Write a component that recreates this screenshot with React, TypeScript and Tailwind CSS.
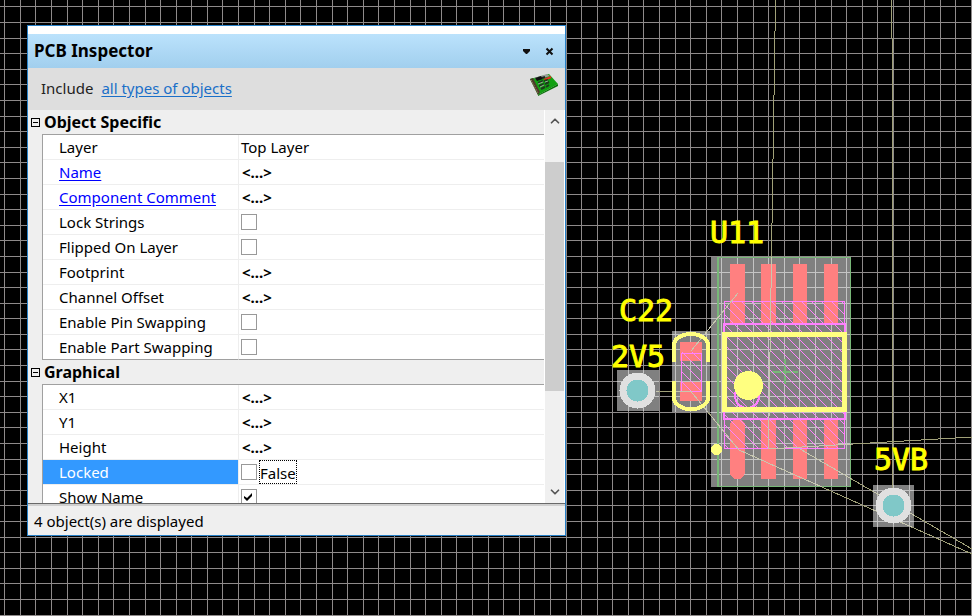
import { ChevronDown, ChevronUp } from "lucide-react";

type Row = {
  label: string;
  kind: "text" | "mixed" | "check";
  value?: string;
  link?: boolean;
  checked?: boolean;
  selected?: boolean;
};

const objectRows: Row[] = [
  { label: "Layer", kind: "text", value: "Top Layer" },
  { label: "Name", kind: "mixed", link: true },
  { label: "Component Comment", kind: "mixed", link: true },
  { label: "Lock Strings", kind: "check" },
  { label: "Flipped On Layer", kind: "check" },
  { label: "Footprint", kind: "mixed" },
  { label: "Channel Offset", kind: "mixed" },
  { label: "Enable Pin Swapping", kind: "check" },
  { label: "Enable Part Swapping", kind: "check" },
];

const graphicalRows: Row[] = [
  { label: "X1", kind: "mixed" },
  { label: "Y1", kind: "mixed" },
  { label: "Height", kind: "mixed" },
  { label: "Locked", kind: "check", value: "False", selected: true },
  { label: "Show Name", kind: "check", checked: true },
];

const GRID = 15.592;
const steps = Array.from({ length: 160 }, (_, i) => i);
const gridPath = [
  ...steps.map((i) => `M${Math.floor(4.7 + i * GRID)} 0h1v3000h-1z`),
  ...steps.map((i) => `M0 ${Math.floor(6.95 + i * GRID)}h3000v1h-3000z`),
].join("");

const padColumns = [
  { x: 730, w: 15 },
  { x: 761, w: 15 },
  { x: 793, w: 14 },
  { x: 824, w: 14 },
];

function Via({ x, y }: { x: number; y: number }) {
  return (
    <g>
      <circle cx={x} cy={y} r="18" fill="#e0e0e0" />
      <circle cx={x} cy={y} r="11" fill="#80c8c8" />
    </g>
  );
}

function Board() {
  return (
    <svg className="absolute inset-0 h-full w-full" aria-label="PCB layout" shapeRendering="crispEdges">
      <defs>
        <clipPath id="selection">
          <rect x="711" y="257" width="140" height="230" />
          <rect x="672" y="331" width="38" height="81" />
          <rect x="617" y="370" width="42" height="41" />
          <rect x="873" y="485" width="41" height="42" />
        </clipPath>
        <pattern id="hatch" width="10" height="10" patternUnits="userSpaceOnUse">
          <path d="M-1 -1L11 11" stroke="#ff80ff" strokeWidth="1" />
        </pattern>
      </defs>

      <path d={gridPath} fill="#8e8a8a" />
      <g clipPath="url(#selection)">
        <rect width="100%" height="100%" fill="#808080" />
        <path d={gridPath} fill="#c4c4c4" />
      </g>

      {/* U11 */}
      <path d="M718 257V487" stroke="#78b878" strokeWidth="2" />
      <path d="M717 257.5H850.5V486" fill="none" stroke="#78b878" />
      <path d="M717 486H851" stroke="#78b878" strokeWidth="1" />
      {padColumns.map((p) => (
        <rect key={p.x} x={p.x} y="264" width={p.w} height="60" fill="#ff8080" />
      ))}
      {padColumns.map((p, i) => (
        <rect key={p.x} x={p.x} y="419" width={p.w} height="60" rx={i === 0 ? 7 : 0} fill="#ff8080" />
      ))}
      <path d="M784.5 359V384M771 372H798" stroke="#78b878" strokeWidth="2" />
      <rect x="724" y="301" width="121" height="148" fill="url(#hatch)" />
      <path d="M724.5 324V301.5H844.5V324M724.5 419V448.5H844.5V419" fill="none" stroke="#ff80ff" />
      <path d="M724 332V324H845V332M724 411V419H845V411" fill="none" stroke="#ff80ff" strokeWidth="2" />
      <circle cx="747" cy="396" r="12" fill="none" stroke="#ff80ff" strokeWidth="2" />

      {/* C22 */}
      <rect x="680" y="342" width="22" height="19" fill="#ff8080" />
      <rect x="680" y="382" width="22" height="19" fill="#ff8080" />
      <rect x="681" y="352" width="20" height="39" fill="url(#hatch)" />
      <rect x="681" y="353" width="20" height="38" fill="none" stroke="#ff80ff" strokeWidth="1" />

      {/* ratsnest */}
      <g fill="none" stroke="#a0a078">
        <path d="M775.5 0L768.5 449L972 437" />
        <path d="M891.5 0V38M892.5 38V490" />
        <path d="M656 391.5H691L739 450L972 554" />
        <path d="M800 449L972 549" />
      </g>
      <g fill="none" stroke="#c8c8b0" clipPath="url(#selection)">
        <path d="M775.5 0L768.5 449L972 437" />
        <path d="M656 391.5H691L739 450L972 554" />
        <path d="M800 449L972 549" />
      </g>
      <path d="M691 351L738 293" stroke="#c8c8b0" />

      {/* silkscreen */}
      <g fill="none" stroke="#ffff80" strokeWidth="4">
        <path d="M674 362V344Q675 339 681 336Q691 332 701 336Q707 339 708 344V362" />
        <path d="M674 381V399Q675 404 681 407Q691 412 701 407Q707 404 708 399V381" />
        <rect x="724.5" y="334" width="120" height="75.5" strokeWidth="5" />
      </g>
      <circle cx="748.5" cy="385.5" r="14.5" fill="#ffff80" />
      <circle cx="716.5" cy="449.5" r="5.5" fill="#ffff80" />
      <Via x={637.5} y={390.5} />
      <Via x={893.5} y={505.5} />

      <g
        className="font-['DejaVu_Sans_Mono',monospace] text-[30px]"
        fill="#ffff00"
        stroke="#ffff00"
        strokeWidth="1"
      >
        <text x="710" y="243">U11</text>
        <text x="619" y="321">C22</text>
        <text x="611" y="367">2V5</text>
        <text x="874" y="470">5VB</text>
      </g>
    </svg>
  );
}

function BoardIcon() {
  return (
    <svg width="30" height="24" viewBox="0 0 30 24" aria-hidden="true">
      <path d="M1 6L20 1L29 11L9 22Z" fill="#12a012" />
      <path d="M9 22L29 11V13L9 23Z" fill="#087008" />
      <path d="M1 6L4 5L11 19L9 22Z" fill="#4c3b2a" />
      <path d="M2 7L9 20" stroke="#a89070" strokeDasharray="1 1" />
      <path d="M5 5L18 1L21 3L8 7Z" fill="#9ca09c" />
      <path d="M6 5L12 3L14 6L8 8Z" fill="#101010" />
      <path d="M13 5L16 4" stroke="#222" strokeWidth="2" />
      <path d="M15 7L22 4" stroke="#e03020" strokeWidth="2" />
      <path d="M9 10L14 8M10 13L15 11M12 16L16 14M15 8L19 7M16 11L20 9M17 14L20 12" stroke="#1d3a1d" strokeWidth="2" />
      <path d="M9 11L14 9M11 14L15 12M16 9L19 8" stroke="#8fae8f" strokeWidth="1" />
    </svg>
  );
}

function CheckBox({ row }: { row: Row }) {
  return (
    <span className="relative flex size-4 shrink-0">
      <input
        type="checkbox"
        aria-label={row.label}
        defaultChecked={row.checked}
        className="peer size-4 appearance-none border border-[#999999] bg-white"
      />
      <svg
        viewBox="0 0 16 16"
        className="pointer-events-none absolute inset-0 hidden peer-checked:block"
        aria-hidden="true"
      >
        <path d="M3 7L6 9L11 4V7L6 12L3 9Z" fill="#000" />
      </svg>
    </span>
  );
}

function PropertyRow({ row }: { row: Row }) {
  return (
    <tr className="h-[25px] group">
      <th
        scope="row"
        className={`h-[25px] w-[196px] border-r border-b border-[#eeeeee] group-last:border-b-[#a0a0a0] p-0 pl-4 text-left font-normal ${
          row.selected ? "bg-[#3399ff] text-white" : ""
        }`}
      >
        {row.link ? (
          <a href="#" className="text-[#0000ff] underline underline-offset-2">
            {row.label}
          </a>
        ) : (
          row.label
        )}
      </th>
      <td className="h-[25px] border-b border-[#eeeeee] group-last:border-b-[#a0a0a0] p-0 pl-0.5">
        {row.kind === "text" && row.value}
        {row.kind === "mixed" && <span className="pl-px font-bold">&lt;...&gt;</span>}
        {row.kind === "check" && (
          <span className="flex items-center gap-0.5">
            <CheckBox row={row} />
            {row.value && (
              <span className="h-6 border border-dotted border-black leading-6">{row.value}</span>
            )}
          </span>
        )}
      </td>
    </tr>
  );
}

function Group({ title, rows }: { title: string; rows: Row[] }) {
  return (
    <section>
      <h2 className="flex h-6 items-center gap-1 pl-[3px] text-base font-bold">
        <button
          type="button"
          aria-label={`Collapse ${title}`}
          className="flex size-[9px] items-center justify-center border border-black"
        >
          <span className="h-px w-[5px] bg-black" />
        </button>
        {title}
      </h2>
      <div className="ml-3.5 border-t border-l border-[#a0a0a0] bg-white">
        <table className="w-full table-fixed border-separate border-spacing-0 leading-6">
          <tbody>
            {rows.map((row) => (
              <PropertyRow key={row.label} row={row} />
            ))}
          </tbody>
        </table>
      </div>
    </section>
  );
}

function Inspector() {
  return (
    <aside className="absolute top-[25px] left-[27px] w-[539px] border border-[#2680c8] bg-white pt-2">
      <header className="flex h-[34px] items-center bg-linear-to-b from-[#bbe2fc] to-[#a1cfee] pr-[11px] pl-1.5">
        <h1 className="flex-1 text-[17px] font-bold">PCB Inspector</h1>
        <button type="button" aria-label="Panel menu" className="mr-3.5">
          <svg width="9" height="9" viewBox="0 0 9 9">
            <path d="M1 2H8V4L5 7H4L1 4Z" fill="#111" />
          </svg>
        </button>
        <button type="button" aria-label="Close">
          <svg width="9" height="9" viewBox="0 0 9 9">
            <path d="M1.5 1.5L7.5 7.5M7.5 1.5L1.5 7.5" stroke="#111" strokeWidth="2" />
          </svg>
        </button>
      </header>

      <div className="flex h-[42px] items-center bg-[#dedede] pr-1.5 pb-0.5 pl-[13px] text-[#222222]">
        Include
        <a href="#" className="ml-2 text-[#1a6fc8] underline underline-offset-2">
          all types of objects
        </a>
        <span className="mb-1.5 ml-auto">
          <BoardIcon />
        </span>
      </div>

      <div className="flex h-[393px] overflow-hidden">
        <div className="min-w-0 flex-1 bg-[#efefef]">
          <Group title="Object Specific" rows={objectRows} />
          <Group title="Graphical" rows={graphicalRows} />
        </div>
        <div className="flex w-[21px] flex-col border-x border-white bg-[#f0f0f0] text-[#555555]">
          <button type="button" aria-label="Scroll up" className="flex h-[52px] justify-center pt-1">
            <ChevronUp size={14} strokeWidth={3} />
          </button>
          <div className="h-[229px] bg-[#cdcdcd]" />
          <button type="button" aria-label="Scroll down" className="mt-auto flex justify-center pb-1">
            <ChevronDown size={14} strokeWidth={3} />
          </button>
        </div>
      </div>

      <footer className="flex h-8 items-center border-t border-[#696969] bg-[#efefef] pt-1 pl-1.5 shadow-[inset_0_2px_#d0d0d0]">
        4 object(s) are displayed
      </footer>
    </aside>
  );
}

export default function App() {
  return (
    <main className="relative h-screen w-full overflow-hidden bg-black font-['Noto_Sans','Open_Sans',sans-serif] text-[15px] text-black">
      <Board />
      <Inspector />
    </main>
  );
}
